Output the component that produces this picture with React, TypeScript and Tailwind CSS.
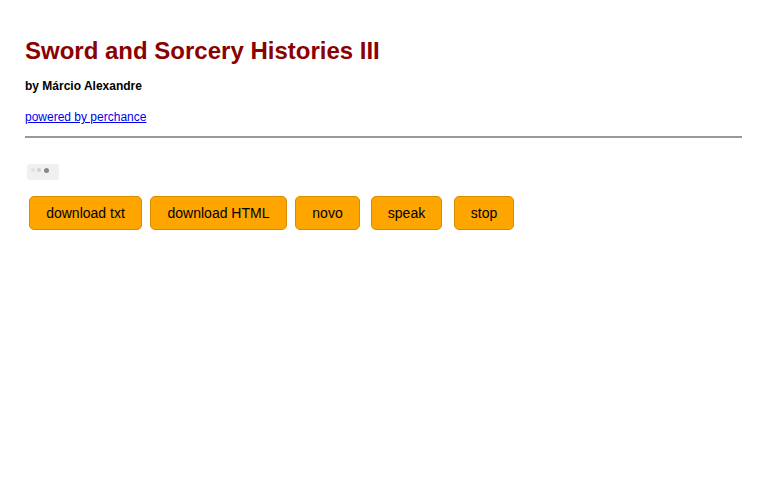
import React from "react";

const buttons = [
  { label: "download txt", cls: "ml-[4px] w-[113px]" },
  { label: "download HTML", cls: "ml-[8px] w-[137px]" },
  { label: "novo", cls: "ml-[8px] w-[65px]" },
  { label: "speak", cls: "ml-[11px] w-[71px]" },
  { label: "stop", cls: "ml-[12px] w-[60px]" },
];

export default function App() {
  return (
    <div className="min-h-[480px] bg-white px-[25px] pt-[37px] font-['Liberation_Sans',Arial,sans-serif] text-black">
      <h1 className="text-[24px] font-bold leading-[28px] text-[#8b0000]">Sword and Sorcery Histories III</h1>
      <p className="mt-[14px] text-[12px] font-bold leading-[14px]">by Márcio Alexandre</p>
      <p className="mt-[17px] text-[12px] leading-[14px]">
        <a href="#" className="text-[#0000ee] underline">powered by perchance</a>
      </p>
      <hr className="mt-[12px] border-0 border-t-[2px] border-[#999] mr-[1px]" />

      {/* loading dots */}
      <div className="ml-[2px] mt-[26px] flex h-[16px] w-[32px] items-start gap-[2px] rounded-[3px] bg-[#f0f0f0] px-[4px] pt-[4px]">
        <span className="h-[4px] w-[4px] rounded-full bg-[#e2e2e2]" />
        <span className="h-[4px] w-[4px] rounded-full bg-[#d0d0d0]" />
        <span className="ml-[1px] h-[5px] w-[5px] rounded-full bg-[#888]" />
      </div>

      <div className="mt-[16px] flex items-center">
        {buttons.map((b) => (
          <button
            key={b.label}
            className={`${b.cls} h-[34px] rounded-[5px] border border-[#d88c00] bg-[#ffa500] text-center text-[14px] leading-[16px] text-black`}
          >
            {b.label}
          </button>
        ))}
      </div>
    </div>
  );
}
